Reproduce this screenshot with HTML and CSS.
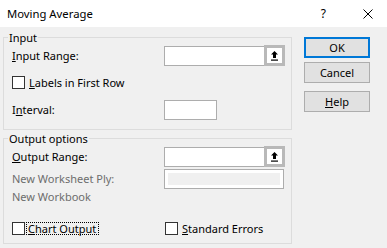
FILE: index.html
```html
<!DOCTYPE html>
<html>
<head>
<meta charset="utf-8">
<link rel="stylesheet" href="styles.css">
</head>
<body>
<div class="dialog">
  <div class="titlebar">
    <span class="title">Moving Average</span>
    <span class="qmark">?</span>
    <svg class="close" width="10" height="10" viewBox="0 0 10 10"><path d="M0.5 0.5 L9.5 9.5 M9.5 0.5 L0.5 9.5" stroke="#000" stroke-width="1" fill="none"/></svg>
  </div>
  <div class="content">
    <div class="groups">
      <div class="group group-input">
        <span class="legend">Input</span>
        <div class="row row-first">
          <span class="lbl"><u>I</u>nput Range:</span>
          <div class="refedit">
            <div class="field"></div>
            <div class="refbtn"><svg width="7" height="10" viewBox="0 0 7 10"><path d="M3.5 0 L7 3.5 L5 3.5 L5 7 L2 7 L2 3.5 L0 3.5 Z" fill="#000"/><rect x="0" y="8.5" width="7" height="1.2" fill="#000"/></svg></div>
          </div>
        </div>
        <div class="row row-check">
          <span class="cb"></span><span class="cblabel"><u>L</u>abels in First Row</span>
        </div>
        <div class="row row-interval">
          <span class="lbl">I<u>n</u>terval:</span>
          <div class="edit edit-small"></div>
        </div>
      </div>
      <div class="group group-output">
        <span class="legend">Output options</span>
        <div class="row row-first">
          <span class="lbl"><u>O</u>utput Range:</span>
          <div class="refedit">
            <div class="field"></div>
            <div class="refbtn"><svg width="7" height="10" viewBox="0 0 7 10"><path d="M3.5 0 L7 3.5 L5 3.5 L5 7 L2 7 L2 3.5 L0 3.5 Z" fill="#000"/><rect x="0" y="8.5" width="7" height="1.2" fill="#000"/></svg></div>
          </div>
        </div>
        <div class="row row-ply">
          <span class="lbl disabled">New Worksheet Ply:</span>
          <div class="edit edit-disabled"><div class="edit-fill"></div></div>
        </div>
        <div class="row row-workbook">
          <span class="lbl disabled">New Workbook</span>
        </div>
        <div class="row row-bottom">
          <div class="checkitem checkitem-first">
            <span class="cb"></span><span class="cblabel focus"><u>C</u>hart Output</span>
          </div>
          <div class="checkitem">
            <span class="cb"></span><span class="cblabel"><u>S</u>tandard Errors</span>
          </div>
        </div>
      </div>
    </div>
    <div class="buttons">
      <div class="btn btn-default">OK</div>
      <div class="btn btn-cancel">Cancel</div>
      <div class="btn btn-help"><u>H</u>elp</div>
    </div>
  </div>
</div>
</body>
</html>
```

FILE: styles.css
```css
* { box-sizing: border-box; }
html, body {
  margin: 0;
  padding: 0;
  background: #f0f0f0;
}
body {
  width: 387px;
  height: 248px;
  overflow: hidden;
  font-family: "Noto Sans", "Liberation Sans", sans-serif;
  font-size: 11px;
  color: #000;
}
u { text-underline-offset: 1px; }
.dialog { width: 387px; height: 248px; }
.titlebar {
  height: 27px;
  background: #fff;
  display: flex;
  align-items: center;
}
.title {
  padding-left: 7px;
  line-height: 14px;
  font-size: 11.3px;
}
.qmark {
  margin-left: auto;
  line-height: 14px;
  font-size: 12px;
}
.close {
  margin-left: 37px;
  margin-right: 14px;
  display: block;
}
.content {
  display: flex;
  align-items: flex-start;
  padding-left: 3px;
}
.groups {
  width: 289px;
  display: flex;
  flex-direction: column;
}
.group {
  border: 1px solid #dcdcdc;
  display: flex;
  flex-direction: column;
  align-items: flex-start;
}
.group-input {
  margin-top: 10px;
  padding-bottom: 9px;
}
.group-output {
  margin-top: 8px;
  padding-bottom: 8px;
}
.legend {
  margin-top: -7px;
  margin-left: 4px;
  padding: 0 1px;
  height: 14px;
  line-height: 14px;
  background: #f0f0f0;
}
.row {
  display: flex;
  align-items: center;
  padding-left: 8px;
  width: 100%;
}
.row-first { margin-top: 1px; height: 20px; }
.row-check { margin-top: 10px; height: 13px; }
.row-interval { margin-top: 11px; height: 20px; }
.row-ply { margin-top: 2px; height: 20px; }
.row-workbook { margin-top: 1px; height: 14px; }
.row-bottom { margin-top: 18px; height: 13px; }
.lbl {
  width: 152px;
  line-height: 14px;
  white-space: nowrap;
}
.disabled { color: #6d6d6d; }
.refedit {
  width: 120px;
  height: 20px;
  border: 1px solid #adadad;
  background: #fff;
  display: flex;
}
.field { flex: 1; }
.refbtn {
  width: 21px;
  height: 21px;
  margin-top: -2px;
  margin-right: -2px;
  border: 3px solid #b9b9b9;
  background: #fff;
  display: flex;
  align-items: center;
  justify-content: center;
}
.refbtn svg { display: block; }
.edit {
  height: 20px;
  border: 1px solid #adadad;
  background: #fff;
}
.edit-small { width: 53px; }
.edit-disabled {
  width: 120px;
  padding: 3px;
}
.edit-fill {
  height: 100%;
  background: #f0f0f0;
}
.cb {
  width: 13px;
  height: 13px;
  border: 1px solid #333;
  background: #fff;
  flex: none;
}
.cblabel {
  margin-left: 4px;
  line-height: 14px;
  white-space: nowrap;
}
.checkitem {
  display: flex;
  align-items: center;
  height: 13px;
}
.checkitem-first { width: 153px; }
.focus {
  margin-left: 2px;
  padding: 0 2px 0 1px;
  line-height: 11px;
  outline: 1px dotted #000;
}
.buttons {
  margin-left: 12px;
  margin-top: 10px;
  width: 66px;
  display: flex;
  flex-direction: column;
}
.btn {
  height: 21px;
  border: 1px solid #adadad;
  background: #e1e1e1;
  display: flex;
  align-items: center;
  justify-content: center;
  line-height: 14px;
}
.btn-default { border: 2px solid #0078d7; }
.btn-cancel { margin-top: 4px; }
.btn-help { margin-top: 8px; }
```
